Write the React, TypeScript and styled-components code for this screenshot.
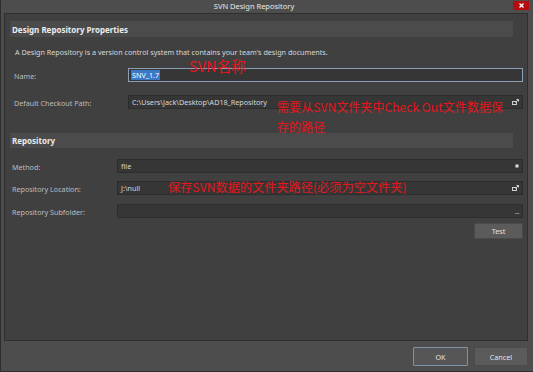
import React from "react";
import styled, { createGlobalStyle } from "styled-components";

const GlobalStyle = createGlobalStyle`
  html, body {
    margin: 0;
    padding: 0;
    background: #4b4b4b;
  }
  body {
    font-family: "Noto Sans", "Open Sans", sans-serif;
  }
`;

const Window = styled.div`
  position: relative;
  width: 533px;
  height: 372px;
  box-sizing: border-box;
  display: flex;
  flex-direction: column;
  background: #4d4d4d;
  border-left: 1px solid #2e2e2e;
  border-bottom: 1px solid #2e2e2e;
  overflow: hidden;
  font-size: 7.2px;
  color: #d2d2d2;
`;

const TitleBar = styled.div`
  height: 13px;
  flex: none;
  display: grid;
  grid-template-columns: 1fr auto 1fr;
  align-items: center;
  padding-right: 26px;
  position: relative;
`;

const Title = styled.div`
  grid-column: 2;
  color: #e8e8e8;
  font-size: 7.5px;
  line-height: 13px;
`;

const CloseButton = styled.div`
  position: absolute;
  right: 4px;
  top: 1px;
  width: 16px;
  height: 9px;
  background: #b30d10;
  display: flex;
  align-items: center;
  justify-content: center;
`;

const Body = styled.div`
  flex: none;
  padding: 0 5px 0 3px;
`;

const Panel = styled.div`
  height: 328px;
  box-sizing: border-box;
  background: #404040;
  border: 1px solid #2f2f2f;
  display: flex;
  flex-direction: column;
`;

const SectionHeader = styled.div<{ $mt: number; $h: number }>`
  margin: ${(p) => p.$mt}px 14px 0 5px;
  height: ${(p) => p.$h}px;
  background: #4b4b4b;
  display: flex;
  align-items: center;
  padding-left: 2px;
  font-weight: 700;
  font-size: 8px;
  color: #ececec;
`;

const Description = styled.div`
  margin-top: 9px;
  height: 12px;
  line-height: 12px;
  padding-left: 10px;
  color: #d8d8d8;
`;

const Row = styled.div<{ $mt: number; $labelW: number; $pl: number }>`
  margin-top: ${(p) => p.$mt}px;
  padding: 0 4px 0 ${(p) => p.$pl}px;
  display: grid;
  grid-template-columns: ${(p) => p.$labelW}px 1fr;
  align-items: center;
`;

const Label = styled.div`
  color: #bdbdbd;
  padding-top: 2px;
`;

const Field = styled.div<{ $focused?: boolean }>`
  height: 14px;
  box-sizing: border-box;
  background: #363636;
  border: 1px solid ${(p) => (p.$focused ? "#8aa0b6" : "#2d2d2d")};
  display: flex;
  align-items: center;
  justify-content: space-between;
  padding: 0 3px 0 2px;
  color: #d6d6d6;
`;

const Selected = styled.span`
  background: #3b79c7;
  color: #ffffff;
  padding: 0 1px;
  line-height: 10px;
`;

const FieldText = styled.span`
  padding-left: 1px;
`;

const Dots = styled.span`
  color: #bdbdbd;
  font-size: 7px;
  letter-spacing: -0.5px;
  line-height: 7px;
`;

const ButtonRow = styled.div`
  margin-top: 5px;
  padding-right: 4px;
  display: flex;
  justify-content: flex-end;
`;

const Button = styled.div<{ $w: number; $h: number; $primary?: boolean }>`
  width: ${(p) => p.$w}px;
  height: ${(p) => p.$h}px;
  box-sizing: border-box;
  background: ${(p) => (p.$primary ? "#565656" : "#5b5b5b")};
  border: 1px solid ${(p) => (p.$primary ? "#7d93aa" : "#4a4a4a")};
  border-radius: 1px;
  display: flex;
  align-items: center;
  justify-content: center;
  color: #e2e2e2;
  font-size: 7.2px;
`;

const Footer = styled.div`
  flex: 1;
  display: flex;
  justify-content: flex-end;
  align-items: flex-start;
  gap: 6px;
  padding: 6px 5px 0 0;
`;

const Annotation = styled.div<{ $x: number; $y: number; $size: number }>`
  position: absolute;
  left: ${(p) => p.$x}px;
  top: ${(p) => p.$y}px;
  font-family: "Noto Sans CJK SC", "Noto Sans", sans-serif;
  font-size: ${(p) => p.$size}px;
  line-height: 20px;
  color: #e3161d;
  white-space: nowrap;
`;

const BrowseIcon = () => (
  <svg width="7" height="6" viewBox="0 0 7 6">
    <rect x="0.5" y="2.5" width="4" height="3" fill="none" stroke="#cfcfcf" />
    <path d="M3.5 3.5 L6.5 0.5 M4.5 0.5 H6.5 V2.5" stroke="#cfcfcf" fill="none" />
  </svg>
);

const DropIcon = () => (
  <svg width="4" height="4" viewBox="0 0 4 4">
    <rect x="0.5" y="0.5" width="3" height="3" fill="#e0e0e0" />
  </svg>
);

const App = () => {
  return (
    <>
      <GlobalStyle />
      <Window>
        <TitleBar>
          <Title>SVN Design Repository</Title>
          <CloseButton>
            <svg width="5" height="5" viewBox="0 0 5 5">
              <path d="M0.5 0.5 L4.5 4.5 M4.5 0.5 L0.5 4.5" stroke="#fff" strokeWidth="1.3" />
            </svg>
          </CloseButton>
        </TitleBar>
        <Body>
          <Panel>
            <SectionHeader $mt={7} $h={16}>
              Design Repository Properties
            </SectionHeader>
            <Description>
              A Design Repository is a version control system that contains your team's design documents.
            </Description>
            <Row $mt={10} $labelW={114} $pl={9}>
              <Label>Name:</Label>
              <Field $focused>
                <Selected>SNV_1.7</Selected>
              </Field>
            </Row>
            <Row $mt={13} $labelW={114} $pl={9}>
              <Label>Default Checkout Path:</Label>
              <Field>
                <FieldText>C:\Users\Jack\Desktop\AD18_Repository</FieldText>
                <BrowseIcon />
              </Field>
            </Row>
            <SectionHeader $mt={24} $h={15}>
              Repository
            </SectionHeader>
            <Row $mt={11} $labelW={105} $pl={7}>
              <Label>Method:</Label>
              <Field>
                <FieldText>file</FieldText>
                <DropIcon />
              </Field>
            </Row>
            <Row $mt={8} $labelW={105} $pl={7}>
              <Label>Repository Location:</Label>
              <Field>
                <FieldText>J:\null</FieldText>
                <BrowseIcon />
              </Field>
            </Row>
            <Row $mt={9} $labelW={105} $pl={7}>
              <Label>Repository Subfolder:</Label>
              <Field>
                <span />
                <Dots>...</Dots>
              </Field>
            </Row>
            <ButtonRow>
              <Button $w={49} $h={16}>
                Test
              </Button>
            </ButtonRow>
          </Panel>
        </Body>
        <Footer>
          <Button $w={55} $h={19} $primary>
            OK
          </Button>
          <Button $w={54} $h={19}>
            Cancel
          </Button>
        </Footer>
        <Annotation $x={188} $y={56} $size={14.6}>
          SVN名称
        </Annotation>
        <Annotation $x={276} $y={97} $size={12.1}>
          需要从SVN文件夹中Check Out文件数据保
          <br />
          存的路径
        </Annotation>
        <Annotation $x={167} $y={177} $size={12.2}>
          保存SVN数据的文件夹路径(必须为空文件夹)
        </Annotation>
      </Window>
    </>
  );
};

export default App;
